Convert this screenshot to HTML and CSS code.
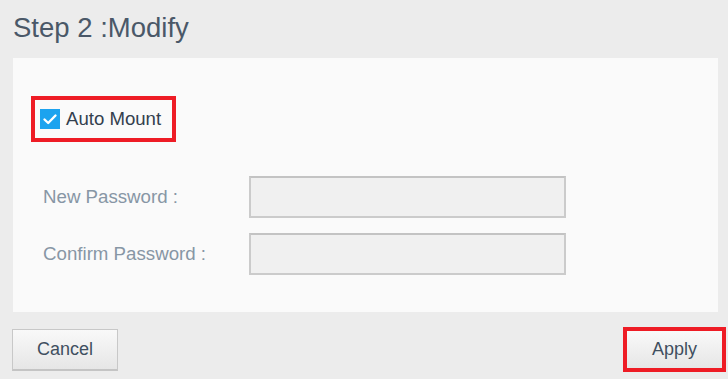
FILE: index.html
```html
<!DOCTYPE html>
<html>
<head>
<meta charset="utf-8">
<link rel="stylesheet" href="styles.css">
</head>
<body>
<h1 class="title">Step 2 :Modify</h1>
<div class="panel">
  <div class="check-row">
    <label class="check-box">
      <span class="check">
        <svg viewBox="0 0 20 20" width="20" height="20"><path d="M4.5 10.5 L8.2 14 L15.5 6.5" fill="none" stroke="#fff" stroke-width="2.4" stroke-linecap="round" stroke-linejoin="round"/></svg>
      </span>
      <span class="check-label">Auto Mount</span>
    </label>
  </div>
  <div class="form">
    <div class="row">
      <span class="label">New Password :</span>
      <div class="input"></div>
    </div>
    <div class="row">
      <span class="label">Confirm Password :</span>
      <div class="input"></div>
    </div>
  </div>
</div>
<div class="actions">
  <button class="btn">Cancel</button>
  <button class="btn btn-apply">Apply</button>
</div>
</body>
</html>
```

FILE: styles.css
```css
html, body {
  margin: 0;
  padding: 0;
  background: #ececec;
  font-family: "Liberation Sans", Arial, sans-serif;
  width: 728px;
  height: 379px;
  overflow: hidden;
}

.title {
  margin: 0;
  padding: 12px 0 0 13px;
  height: 58px;
  box-sizing: border-box;
  font-size: 27.5px;
  font-weight: normal;
  color: #4a5868;
  line-height: 32px;
}

.panel {
  margin: 0 10px 0 13px;
  height: 254px;
  background: #fafafa;
  box-sizing: border-box;
  padding: 38px 0 0 18px;
}

.check-row {
  display: flex;
}

.check-box {
  display: flex;
  align-items: center;
  border: 4px solid #ee1c25;
  width: 145px;
  height: 46px;
  box-sizing: border-box;
  padding-left: 5px;
}

.check {
  width: 20px;
  height: 20px;
  background: #1ca3ef;
  display: flex;
}

.check-label {
  margin-left: 6px;
  font-size: 18.6px;
  color: #33404e;
}

.form {
  margin-top: 34px;
  display: flex;
  flex-direction: column;
  gap: 15px;
}

.row {
  display: flex;
  align-items: center;
}

.label {
  width: 206px;
  padding-left: 12px;
  font-size: 18.7px;
  color: #8796a5;
}

.input {
  width: 317px;
  height: 42px;
  box-sizing: border-box;
  background: #f0f0f0;
  border: 2px solid #cbcbcb;
  border-top-color: #c3c3c3;
}

.actions {
  display: flex;
  justify-content: space-between;
  align-items: center;
  padding: 15px 2px 0 12px;
}

.btn {
  font-family: "Liberation Sans", Arial, sans-serif;
  font-size: 18px;
  color: #3f4f60;
  width: 106px;
  height: 42px;
  border: 1px solid #c8c8c8;
  border-bottom: 2px solid #c4c4c4;
  background: linear-gradient(#f9f9f9, #e6e6e6);
  padding: 0;
}

.btn-apply {
  width: 103px;
  height: 45px;
  border: 4px solid #ee1c25;
}
```
